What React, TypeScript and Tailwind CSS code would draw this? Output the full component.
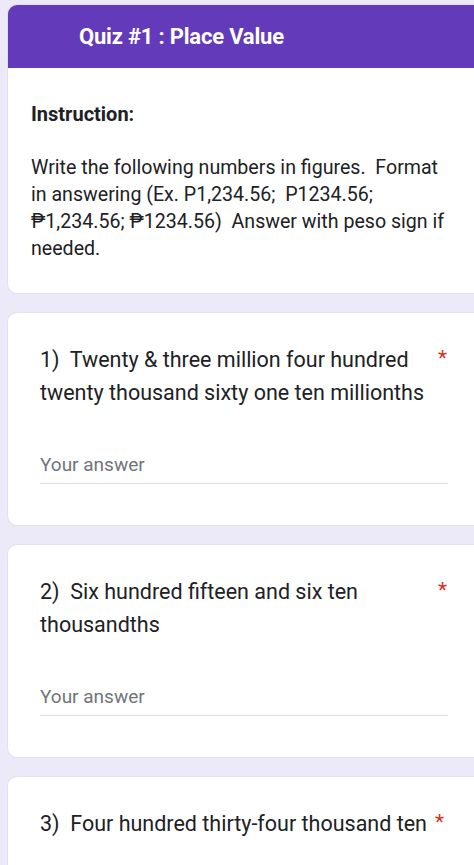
import React from "react";

const questions = [
  {
    n: "1)",
    text: "Twenty & three million four hundred twenty thousand sixty one ten millionths",
  },
  { n: "2)", text: "Six hundred fifteen and six ten thousandths" },
  { n: "3)", text: "Four hundred thirty-four thousand ten" },
];

function QuestionCard({ n, text }: { n: string; text: string }) {
  return (
    <div className="mt-[18px] bg-white rounded-l-[10px] border border-r-0 border-[#e3e0ee] pl-[32px] pr-[24px] pt-[30px] pb-[41px]">
      <div className="flex items-start">
        <p className="text-[21.5px] leading-[33px] text-[#202124]">
          {n}&nbsp; {text}
        </p>
        <span className="shrink-0 text-[#d93025] text-[21px] leading-[30px] pl-[8px] w-[20px]">*</span>
      </div>
      <div className="mt-[44px] w-[408px]">
        <p className="text-[19px] leading-[24px] text-[#70757a]">Your answer</p>
        <div className="mt-[6px] h-px bg-[#e0e0e0]" />
      </div>
    </div>
  );
}

export default function App() {
  return (
    <div
      className="min-h-screen bg-[#ece9f9] pl-[7px] pt-[4px] overflow-hidden"
      style={{ fontFamily: "Roboto, 'Liberation Sans', sans-serif" }}
    >
      {/* Header card */}
      <div className="rounded-l-[10px] overflow-hidden border border-r-0 border-[#e3e0ee] bg-white">
        <div className="bg-[#633ab9] h-[63px] flex items-center pl-[71px]">
          <h1 className="text-white text-[22px] font-bold tracking-[-0.2px]">Quiz #1 : Place Value</h1>
        </div>
        <div className="pl-[23px] pr-[20px] pt-[33px] pb-[31px]">
          <p className="text-[20px] font-bold leading-[27px] text-[#202124]">Instruction:</p>
          <p className="mt-[26px] text-[19.6px] leading-[27px] text-[#202124] w-[420px]">
            Write the following numbers in figures.&nbsp; Format in answering (Ex. P1,234.56;&nbsp; P1234.56;
            ₱1,234.56; ₱1234.56)&nbsp; Answer with peso sign if needed.
          </p>
        </div>
      </div>

      {questions.map((q) => (
        <QuestionCard key={q.n} n={q.n} text={q.text} />
      ))}
    </div>
  );
}
